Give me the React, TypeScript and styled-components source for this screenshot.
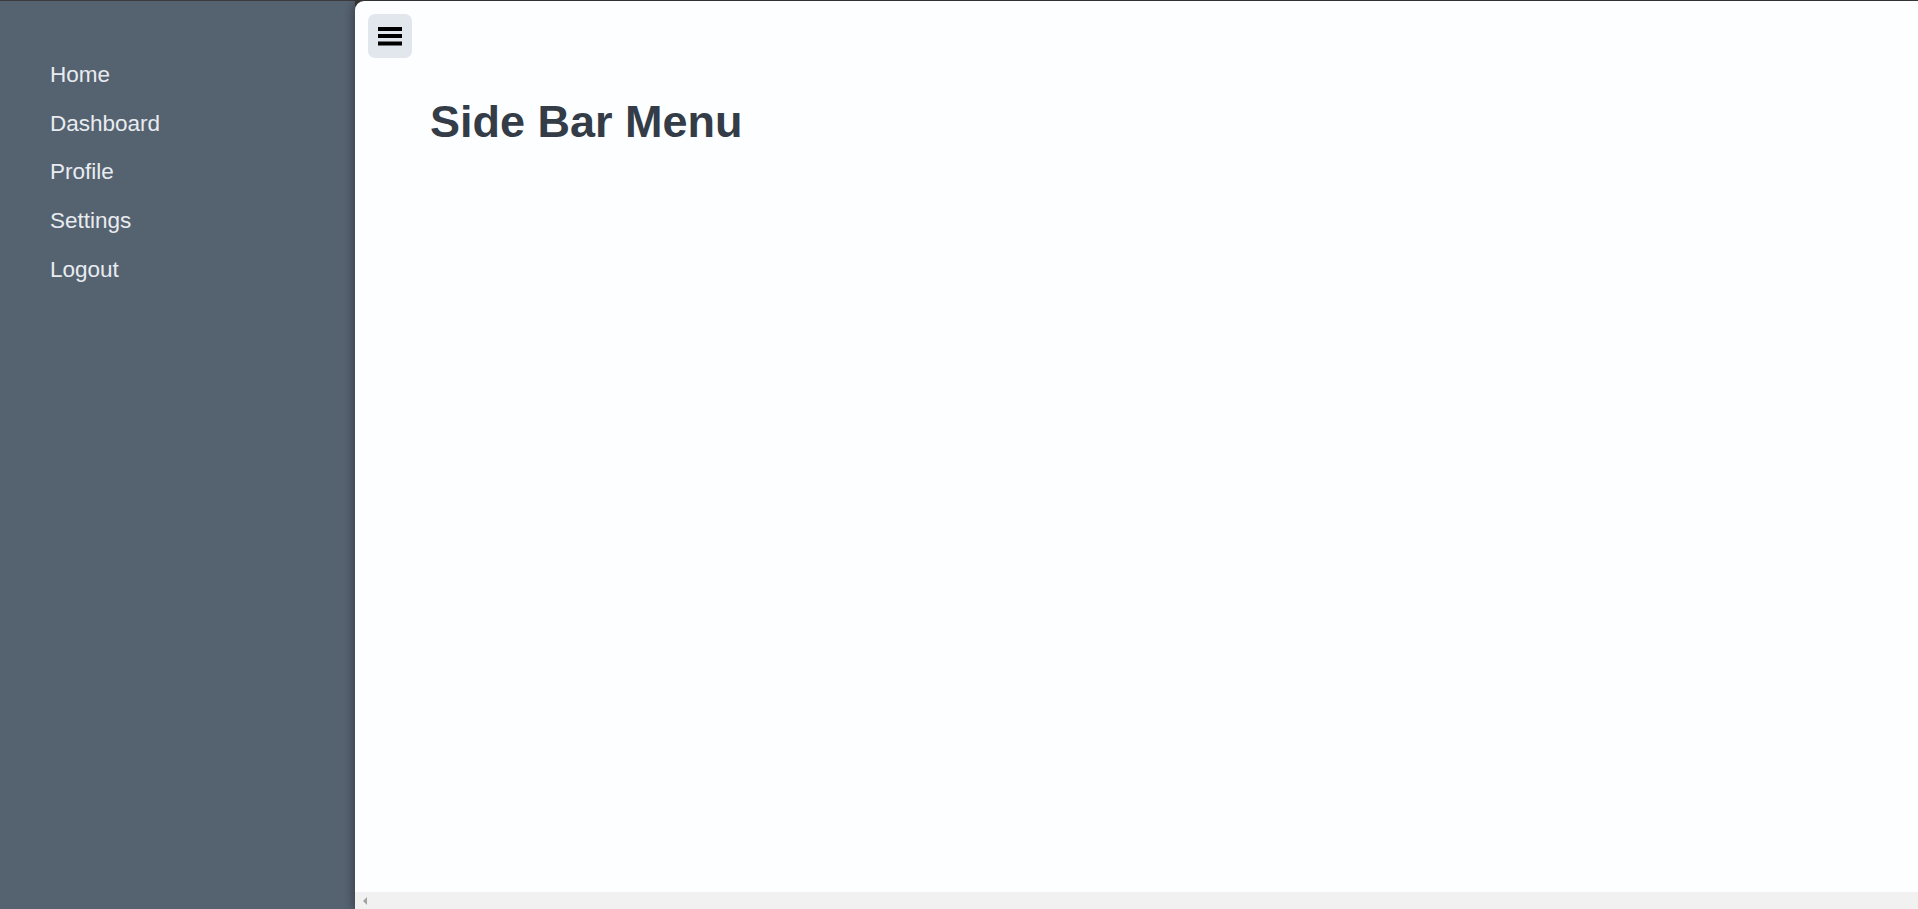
import React from "react";
import styled, { createGlobalStyle } from "styled-components";

const GlobalStyle = createGlobalStyle`
  html, body {
    margin: 0;
    padding: 0;
    height: 100%;
    background: #3a3a3a;
    font-family: "Liberation Sans", Arial, sans-serif;
  }

  #root {
    height: 100%;
  }
`;

const Layout = styled.div`
  display: flex;
  height: 100vh;
  padding-top: 1px;
  box-sizing: border-box;
  overflow: hidden;
`;

const SideBar = styled.nav`
  width: 355px;
  flex-shrink: 0;
  background: #556270;
  padding: 50px 0 0 50px;
  box-sizing: border-box;
`;

const MenuList = styled.ul`
  list-style: none;
  margin: 0;
  padding: 0;
`;

const MenuItem = styled.li`
  padding: 12px 0;
  font-size: 22.5px;
  line-height: 24.7px;
  color: #e8ecf0;
  cursor: pointer;
`;

const Main = styled.main`
  flex: 1;
  display: flex;
  flex-direction: column;
  background: #fdfeff;
  border-top-left-radius: 9px;
  box-shadow: -3px 0 9px rgba(0, 0, 0, 0.28);
  overflow: hidden;
  position: relative;
  z-index: 1;
`;

const Content = styled.div`
  flex: 1;
  padding: 13px 0 0 13px;
`;

const ToggleButton = styled.button`
  width: 44px;
  height: 44px;
  padding: 0;
  border: none;
  border-radius: 7px;
  background: #e2e6ed;
  display: flex;
  align-items: center;
  justify-content: center;
  cursor: pointer;
`;

const Title = styled.h1`
  margin: 38px 0 0 62px;
  font-size: 45px;
  font-weight: bold;
  color: #333c47;
`;

const ScrollTrack = styled.div`
  height: 17px;
  flex-shrink: 0;
  background: #f1f1f1;
  display: flex;
  align-items: center;
  padding-left: 8px;
`;

const ArrowLeft = styled.span`
  width: 0;
  height: 0;
  border-top: 4px solid transparent;
  border-bottom: 4px solid transparent;
  border-right: 4px solid #a3a3a3;
`;

const menu = ["Home", "Dashboard", "Profile", "Settings", "Logout"];

const App: React.FC = () => {
  return (
    <>
      <GlobalStyle />
      <Layout>
        <SideBar>
          <MenuList>
            {menu.map((item) => (
              <MenuItem key={item}>{item}</MenuItem>
            ))}
          </MenuList>
        </SideBar>
        <Main>
          <Content>
            <ToggleButton aria-label="Toggle menu">
              <svg width="24" height="20" viewBox="0 0 24 20">
                <rect x="0" y="1" width="24" height="4" fill="#000" />
                <rect x="0" y="8" width="24" height="4" fill="#000" />
                <rect x="0" y="15.5" width="24" height="4" fill="#000" />
              </svg>
            </ToggleButton>
            <Title>Side Bar Menu</Title>
          </Content>
          <ScrollTrack>
            <ArrowLeft />
          </ScrollTrack>
        </Main>
      </Layout>
    </>
  );
};

export default App;
